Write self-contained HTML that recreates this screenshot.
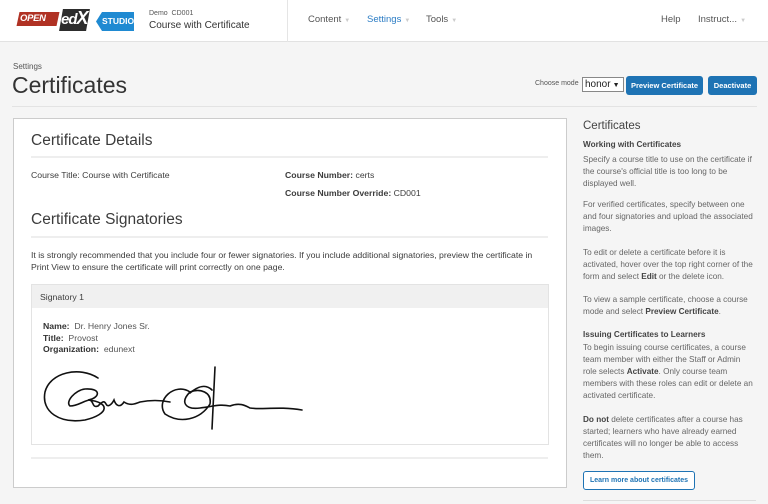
<!DOCTYPE html>
<html><head><style>
*{margin:0;padding:0;box-sizing:border-box}
body{width:768px;height:504px;overflow:hidden;background:#f5f5f5;font-family:"Liberation Sans",sans-serif;color:#3c3c3c;position:relative}
.a{position:absolute;white-space:nowrap}
.hdr{position:absolute;left:0;top:0;width:768px;height:42px;background:#fff;border-bottom:1px solid #e2e2e2}
.nav{font-size:9.5px;color:#555}
.caret{color:#ccc;font-size:6px;margin-left:3px}
.btn{position:absolute;background:#1e73b4;color:#fff;font-size:7.5px;font-weight:bold;border-radius:3px;text-align:center;line-height:19px;height:19px}
.card{position:absolute;left:13px;top:118px;width:554px;height:370px;background:#fff;border:1px solid #ccc}
.h2{font-size:15.5px;color:#3c3c3c}
.hr{position:absolute;height:2px;background:#eee}
.t{font-size:8.7px;color:#3c3c3c}
.sb{position:absolute;left:583px;font-size:8.2px;line-height:12px;color:#666;width:172px;white-space:normal}
.sb b{color:#444}
</style></head><body>
<div class="hdr"></div>
<div class="a" style="left:18px;top:12px;width:40px;height:14px;background:#b03224;transform:skewX(-12deg)"></div>
<div class="a" style="left:20px;top:13px;font-size:9.5px;font-weight:bold;font-style:italic;color:#fff;letter-spacing:-0.3px">OPEN</div>
<div class="a" style="left:61px;top:9px;width:27px;height:22px;background:#2d2d2d;transform:skewX(-10deg)"></div>
<div class="a" style="left:61px;top:8px;font-size:15px;font-weight:bold;font-style:italic;color:#fff;letter-spacing:-1px">ed<span style="font-size:18px">X</span></div>
<div class="a" style="left:96px;top:12px;width:38px;height:19px;background:#1f8ad2;clip-path:polygon(6px 0,100% 0,100% 100%,6px 100%,0 50%)"></div>
<div class="a" style="left:102px;top:16px;font-size:8.5px;font-weight:bold;color:#fff">STUDIO</div>
<div class="a" style="left:149px;top:10px;font-size:7px;color:#555">Demo&nbsp; CD001</div>
<div class="a" style="left:149px;top:20px;font-size:10px;color:#333">Course with Certificate</div>
<div class="a" style="left:287px;top:0;width:1px;height:42px;background:#e5e5e5"></div>
<div class="a nav" style="left:308px;top:14px">Content<span class="caret">▼</span></div>
<div class="a nav" style="left:367px;top:14px;color:#2b7cc4">Settings<span class="caret">▼</span></div>
<div class="a nav" style="left:426px;top:14px">Tools<span class="caret">▼</span></div>
<div class="a nav" style="left:661px;top:14px">Help</div>
<div class="a nav" style="left:698px;top:14px">Instruct...<span class="caret">▼</span></div>

<div class="a" style="left:13px;top:62px;font-size:8px;color:#555">Settings</div>
<div class="a" style="left:12px;top:72px;font-size:23px;color:#333">Certificates</div>
<div class="a" style="left:535px;top:80px;font-size:7px;color:#555">Choose mode</div>
<div class="a" style="left:582px;top:77px;width:42px;height:15px;border:1px solid #888;background:#fff;font-size:10px;padding-left:2px;line-height:13px;color:#222">honor<span style="font-size:7px;margin-left:2px">▼</span></div>
<div class="btn" style="left:626px;top:76px;width:77px">Preview Certificate</div>
<div class="btn" style="left:708px;top:76px;width:49px">Deactivate</div>
<div class="hr" style="left:12px;top:106px;width:745px;height:1px;background:#e3e3e3"></div>

<div class="card"></div>
<div class="a h2" style="left:31px;top:132px">Certificate Details</div>
<div class="hr" style="left:31px;top:156px;width:517px"></div>
<div class="a t" style="left:31px;top:170px">Course Title: Course with Certificate</div>
<div class="a t" style="left:285px;top:170px"><b>Course Number:</b> certs</div>
<div class="a t" style="left:285px;top:188px"><b>Course Number Override:</b> CD001</div>
<div class="a h2" style="left:31px;top:211px">Certificate Signatories</div>
<div class="hr" style="left:31px;top:236px;width:517px"></div>
<div class="a t" style="left:31px;top:249px;line-height:12px">It is strongly recommended that you include four or fewer signatories. If you include additional signatories, preview the certificate in<br>Print View to ensure the certificate will print correctly on one page.</div>
<div class="a" style="left:31px;top:284px;width:518px;height:161px;border:1px solid #e3e3e3;background:#fff"></div>
<div class="a" style="left:32px;top:285px;width:516px;height:23px;background:#f0f0f0"></div>
<div class="a t" style="left:40px;top:292px">Signatory 1</div>
<div class="a t" style="left:43px;top:321px;line-height:11.5px;color:#555"><b style="color:#333">Name:</b>&nbsp; Dr. Henry Jones Sr.<br><b style="color:#333">Title:</b>&nbsp; Provost<br><b style="color:#333">Organization:</b>&nbsp; edunext</div>
<svg class="a" style="left:40px;top:362px" width="270" height="70" viewBox="0 0 270 70" fill="none" stroke="#111" stroke-width="1.6" stroke-linecap="round">
<path d="M58 16 C40 4 10 10 5 30 C1 50 20 62 45 58 C70 52 70 40 48 38 C60 36 62 26 45 27 C35 28 25 40 30 44 C38 44 45 38 50 38 C54 40 52 46 58 44 C62 40 64 38 66 42 C68 46 72 42 74 38 C76 44 80 46 84 40 C90 44 95 42 100 40 C110 38 120 38 130 40"/>
<path d="M150 30 C135 20 115 38 125 52 C140 62 160 58 170 42 C172 30 160 26 150 30 C140 40 145 48 160 46 C175 44 180 42 190 44 C200 40 206 44 210 46 C220 48 240 44 262 48"/>
<path d="M175 5 L172 67"/>
<path d="M150 31 C158 24 166 22 172 28"/>
</svg>
<div class="hr" style="left:31px;top:457px;width:517px"></div>

<div class="a" style="left:583px;top:120px;font-size:11.5px;color:#444">Certificates</div>
<div class="sb" style="top:139px"><b>Working with Certificates</b></div>
<div class="sb" style="top:154px">Specify a course title to use on the certificate if the course's official title is too long to be displayed well.</div>
<div class="sb" style="top:199px">For verified certificates, specify between one and four signatories and upload the associated images.</div>
<div class="sb" style="top:247px">To edit or delete a certificate before it is activated, hover over the top right corner of the form and select <b>Edit</b> or the delete icon.</div>
<div class="sb" style="top:294px">To view a sample certificate, choose a course mode and select <b>Preview Certificate</b>.</div>
<div class="sb" style="top:329px"><b>Issuing Certificates to Learners</b></div>
<div class="sb" style="top:342px">To begin issuing course certificates, a course team member with either the Staff or Admin role selects <b>Activate</b>. Only course team members with these roles can edit or delete an activated certificate.</div>
<div class="sb" style="top:414px"><b>Do not</b> delete certificates after a course has started; learners who have already earned certificates will no longer be able to access them.</div>
<div class="a" style="left:583px;top:471px;width:112px;height:19px;border:1px solid #1e73b4;border-radius:3px;background:#fff;font-size:7px;font-weight:bold;color:#1e73b4;text-align:center;line-height:17px">Learn more about certificates</div>
<div class="hr" style="left:583px;top:500px;width:173px;height:1px;background:#ddd"></div>
</body></html>
